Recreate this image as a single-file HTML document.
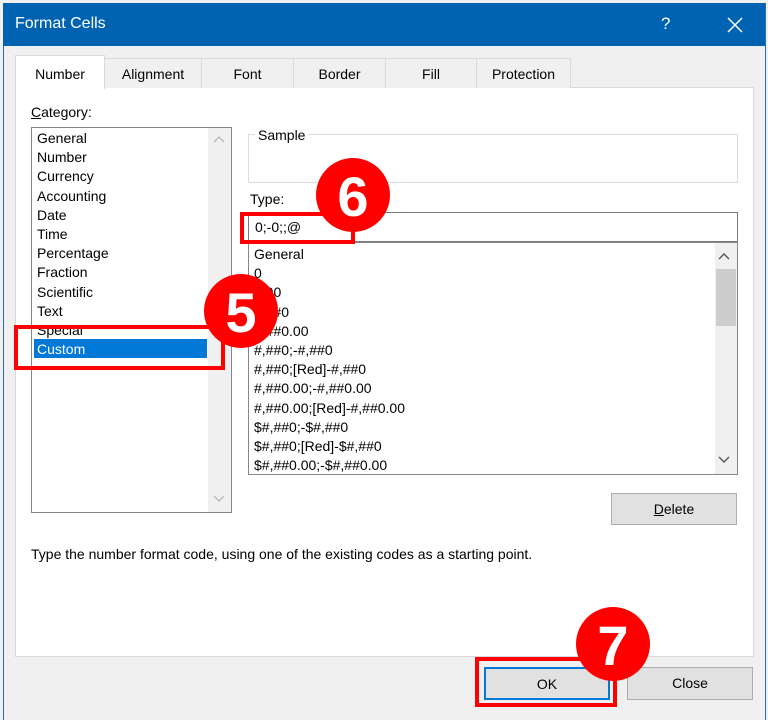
<!DOCTYPE html>
<html><head><style>
body{margin:0;width:768px;height:719px;background:#f0f0f0;position:relative;overflow:hidden;font-family:"Liberation Sans",sans-serif;font-size:14px;color:#000}
.a{position:absolute}
.win{left:3px;top:3px;width:761px;height:716px;border:1px solid #2b6cb0;border-bottom:none;background:#f0f0f0}
.title{left:3px;top:3px;width:762px;height:43px;background:#0063b1;color:#fff}
.tab{top:58px;height:29px;border:1px solid #d9d9d9;border-bottom:none;background:#f0f0f0;text-align:center;line-height:31px;font-size:14px}
.box{background:#fff;border:1px solid #828790}
.row{position:absolute;left:5px;line-height:19.2px}
.btn{background:#e1e1e1;border:1px solid #adadad;text-align:center;line-height:30px}
.red{border:4px solid #f00}
.circ{background:#f00;border-radius:50%;color:#fff;font-weight:bold;text-align:center;font-size:56px}
</style></head><body>
<div class="a win"></div>
<div class="a title"><span class="a" style="left:12px;top:12px;font-size:16px">Format Cells</span><span class="a" style="left:658px;top:11px;font-size:17px">?</span>
<svg class="a" style="left:724px;top:14px" width="16" height="16"><path d="M1 1L15 15M15 1L1 15" stroke="#fff" stroke-width="1.5"/></svg></div>
<div class="a" style="left:15px;top:87px;width:737px;height:568px;background:#fff;border:1px solid #d9d9d9"></div>
<div class="a tab" style="left:15px;top:55px;height:33px;width:88px;background:#fff;line-height:36px">Number</div>
<div class="a tab" style="left:104px;width:96px">Alignment</div>
<div class="a tab" style="left:201px;width:91px">Font</div>
<div class="a tab" style="left:293px;width:91px">Border</div>
<div class="a tab" style="left:385px;width:90px">Fill</div>
<div class="a tab" style="left:476px;width:93px">Protection</div>
<div class="a" style="left:31px;top:104px"><u>C</u>ategory:</div>
<div class="a box" style="left:31px;top:127px;width:199px;height:384px">
<div class="a" style="right:0;top:0;width:23px;height:100%;background:#f0f0f0"></div>
<svg class="a" style="left:181px;top:7px" width="12" height="8"><path d="M1 7L6 2L11 7" stroke="#bbb" fill="none" stroke-width="1.4"/></svg>
<svg class="a" style="left:181px;top:367px" width="12" height="8"><path d="M1 1L6 6L11 1" stroke="#bbb" fill="none" stroke-width="1.4"/></svg>
<div class="a" style="left:2px;top:211px;width:173px;height:19px;background:#0078d7"></div>
<div class="row" style="top:1px">General</div><div class="row" style="top:20px">Number</div><div class="row" style="top:39px">Currency</div><div class="row" style="top:59px">Accounting</div><div class="row" style="top:78px">Date</div><div class="row" style="top:97px">Time</div><div class="row" style="top:116px">Percentage</div><div class="row" style="top:135px">Fraction</div><div class="row" style="top:155px">Scientific</div><div class="row" style="top:174px">Text</div><div class="row" style="top:193px">Special</div><div class="row" style="top:212px;color:#fff">Custom</div>
</div>
<div class="a" style="left:248px;top:134px;width:488px;height:47px;border:1px solid #dcdcdc"></div>
<div class="a" style="left:255px;top:127px;background:#fff;padding:0 3px">Sample</div>
<div class="a" style="left:250px;top:191px">Type:</div>
<div class="a box" style="left:248px;top:212px;width:488px;height:28px;border-color:#7a7a7a"><span class="a" style="left:6px;top:6px">0;-0;;@</span></div>
<div class="a box" style="left:248px;top:242px;width:488px;height:231px">
<div class="a" style="right:0;top:0;width:22px;height:100%;background:#f0f0f0"></div>
<div class="a" style="right:1px;top:26px;width:20px;height:57px;background:#cdcdcd"></div>
<svg class="a" style="left:469px;top:9px" width="12" height="8"><path d="M1 7L6 2L11 7" stroke="#555" fill="none" stroke-width="1.4"/></svg>
<svg class="a" style="left:469px;top:213px" width="12" height="8"><path d="M1 1L6 6L11 1" stroke="#555" fill="none" stroke-width="1.4"/></svg>
<div class="row" style="top:2px">General</div><div class="row" style="top:21px">0</div><div class="row" style="top:40px">0.00</div><div class="row" style="top:60px">#,##0</div><div class="row" style="top:79px">#,##0.00</div><div class="row" style="top:98px">#,##0;-#,##0</div><div class="row" style="top:117px">#,##0;[Red]-#,##0</div><div class="row" style="top:136px">#,##0.00;-#,##0.00</div><div class="row" style="top:156px">#,##0.00;[Red]-#,##0.00</div><div class="row" style="top:175px">$#,##0;-$#,##0</div><div class="row" style="top:194px">$#,##0;[Red]-$#,##0</div><div class="row" style="top:213px">$#,##0.00;-$#,##0.00</div>
</div>
<div class="a btn" style="left:611px;top:493px;width:124px;height:30px"><u>D</u>elete</div>
<div class="a" style="left:31px;top:546px">Type the number format code, using one of the existing codes as a starting point.</div>
<div class="a btn" style="left:484px;top:667px;width:122px;height:29px;border:2px solid #0078d7">OK</div>
<div class="a btn" style="left:627px;top:667px;width:124px;height:31px">Close</div>
<div class="a red" style="left:14px;top:325px;width:203px;height:37px"></div>
<div class="a red" style="left:240px;top:212px;width:107px;height:24px"></div>
<div class="a red" style="left:475px;top:657px;width:134px;height:42px"></div>
<div class="a circ" style="left:204px;top:274px;width:74px;height:74px;line-height:78px">5</div>
<div class="a circ" style="left:316px;top:158px;width:74px;height:74px;line-height:78px">6</div>
<div class="a circ" style="left:576px;top:607px;width:74px;height:74px;line-height:78px">7</div>
</body></html>
